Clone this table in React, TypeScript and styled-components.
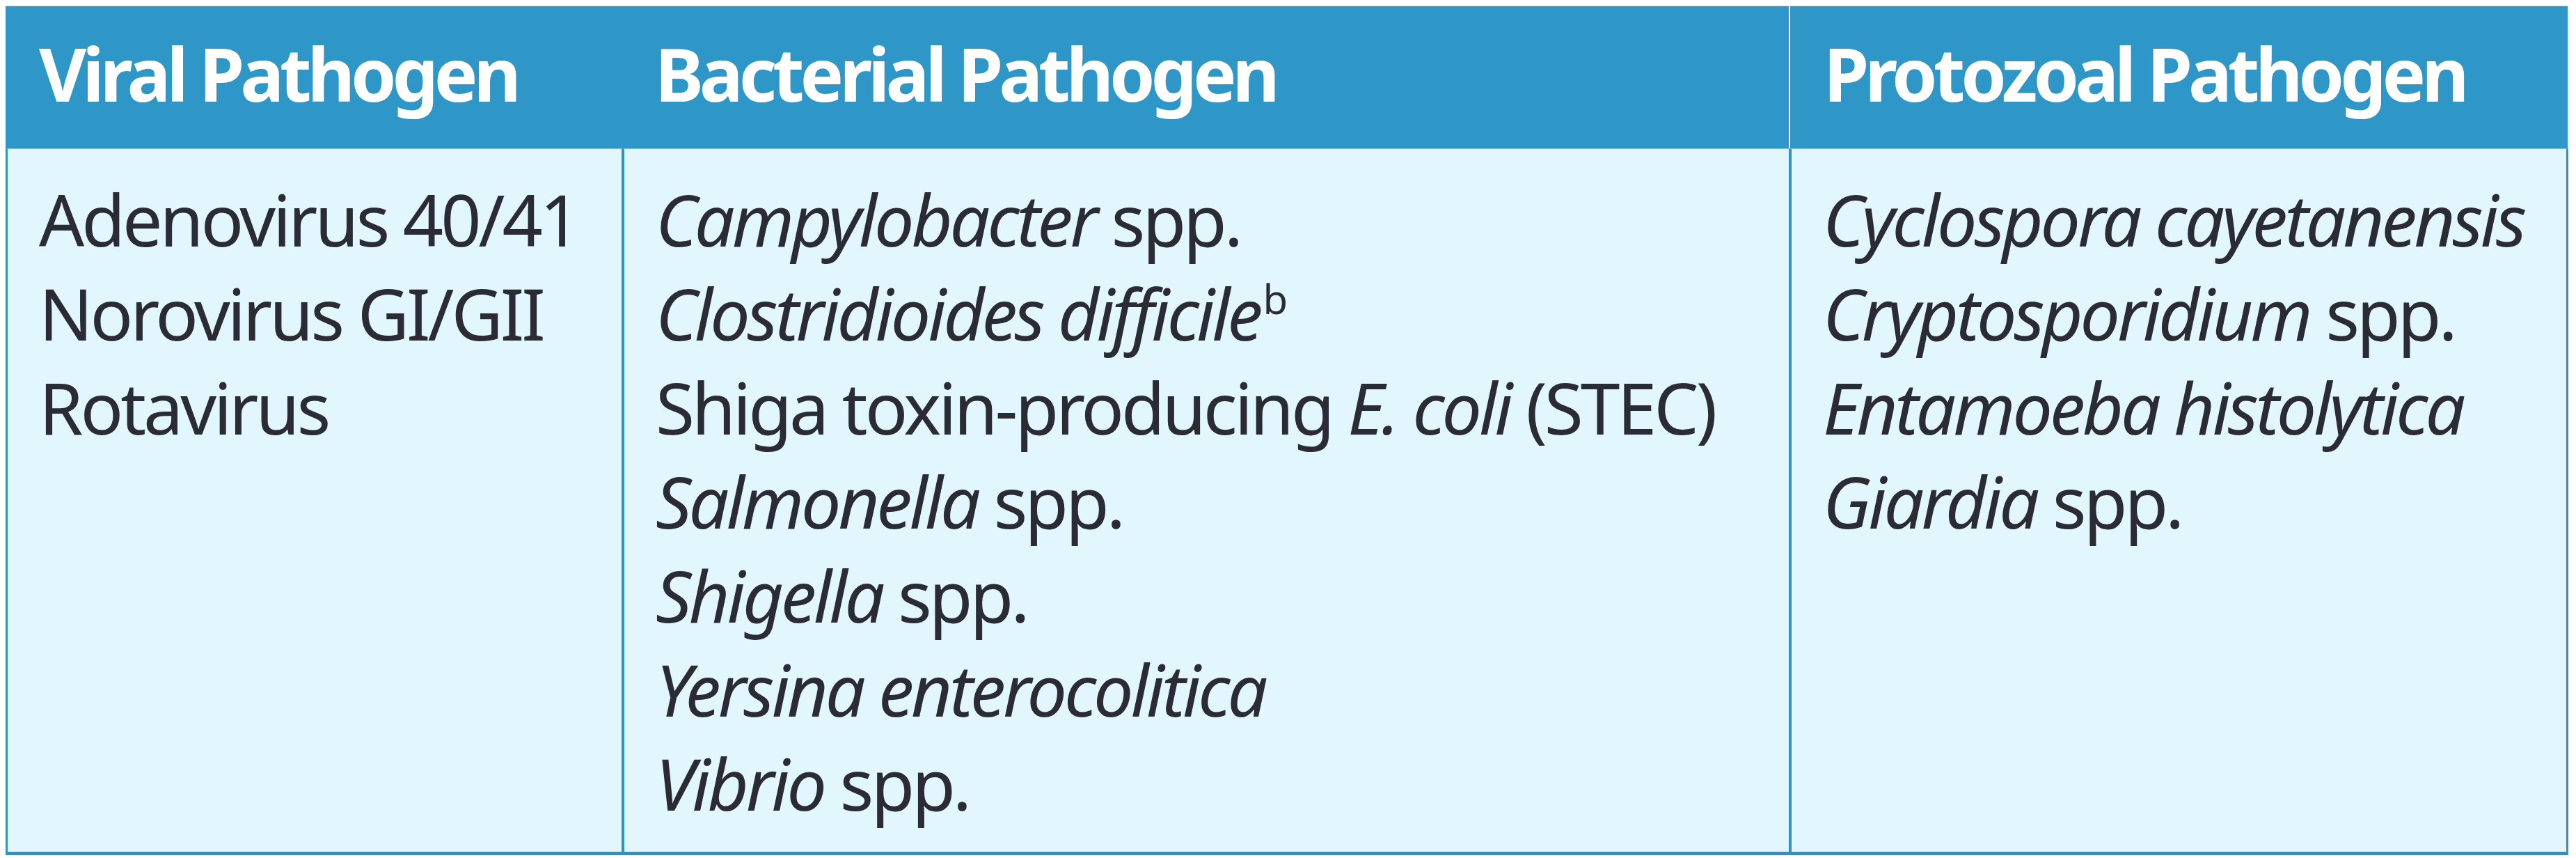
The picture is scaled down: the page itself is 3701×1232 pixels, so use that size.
import React from "react";
import styled, { createGlobalStyle } from "styled-components";

const GlobalStyle = createGlobalStyle`
    html, body {
        margin: 0;
        padding: 0;
        background: #ffffff;
    }
    body {
        font-family: "Noto Sans", "Open Sans", sans-serif;
    }
`;

const Page = styled.div`
    padding: 8px;
`;

const Table = styled.div`
    display: grid;
    grid-template-columns: 885px 1677px 1120px;
    width: 3682px;
`;

const HeadCell = styled.div<{ $divider?: boolean; $last?: boolean }>`
    display: flex;
    align-items: center;
    height: 205px;
    box-sizing: border-box;
    padding: 0 0 12px 48px;
    background: #2f96c8;
    border-top: 1px solid #cfe2ec;
    border-left: ${(p) => (p.$divider ? "2px solid #ffffff" : "none")};
    border-right: ${(p) => (p.$last ? "1px solid #d6e6ef" : "none")};
    color: #ffffff;
    font-size: 105px;
    font-weight: 700;
    letter-spacing: -6px;
    white-space: nowrap;
`;

const BodyCell = styled.div<{ $first?: boolean; $last?: boolean }>`
    box-sizing: border-box;
    padding: 33px 20px 31px 45px;
    background: #e1f6fd;
    border-top: 1px solid #7fc3e3;
    border-bottom: 5px solid #2e92c6;
    border-left: ${(p) => (p.$first ? "3px solid #2e92c6" : "4px solid #2e92c6")};
    border-right: ${(p) => (p.$last ? "3px solid #2e92c6" : "none")};
    color: #2a2b35;
    font-size: 102px;
    letter-spacing: -4px;
    line-height: 135px;
    white-space: nowrap;
`;

const Line = styled.div``;

const Species = styled.i`
    font-style: italic;
`;

const Note = styled.sup`
    font-size: 58px;
    letter-spacing: 0;
    line-height: 0;
    vertical-align: 38px;
    margin-left: 4px;
`;

const viral = ["Adenovirus 40/41", "Norovirus GI/GII", "Rotavirus"];

const App: React.FC = () => {
    return (
        <Page>
            <GlobalStyle />
            <Table>
                <HeadCell>Viral Pathogen</HeadCell>
                <HeadCell>Bacterial Pathogen</HeadCell>
                <HeadCell $divider $last>
                    Protozoal Pathogen
                </HeadCell>

                <BodyCell $first>
                    {viral.map((v) => (
                        <Line key={v}>{v}</Line>
                    ))}
                </BodyCell>

                <BodyCell>
                    <Line>
                        <Species>Campylobacter</Species> spp.
                    </Line>
                    <Line>
                        <Species>Clostridioides difficile</Species>
                        <Note>b</Note>
                    </Line>
                    <Line>
                        Shiga toxin-producing <Species>E. coli</Species> (STEC)
                    </Line>
                    <Line>
                        <Species>Salmonella</Species> spp.
                    </Line>
                    <Line>
                        <Species>Shigella</Species> spp.
                    </Line>
                    <Line>
                        <Species>Yersina enterocolitica</Species>
                    </Line>
                    <Line>
                        <Species>Vibrio</Species> spp.
                    </Line>
                </BodyCell>

                <BodyCell $last>
                    <Line>
                        <Species>Cyclospora cayetanensis</Species>
                    </Line>
                    <Line>
                        <Species>Cryptosporidium</Species> spp.
                    </Line>
                    <Line>
                        <Species>Entamoeba histolytica</Species>
                    </Line>
                    <Line>
                        <Species>Giardia</Species> spp.
                    </Line>
                </BodyCell>
            </Table>
        </Page>
    );
};

export default App;
